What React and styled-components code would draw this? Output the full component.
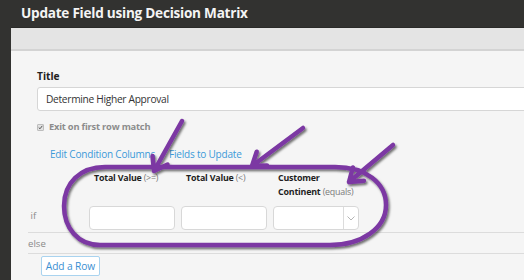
import React from "react";
import styled, { createGlobalStyle } from "styled-components";

const Global = createGlobalStyle`
  html, body { margin: 0; padding: 0; background: #323230; overflow: hidden; }
  * { box-sizing: border-box; }
`;

const Root = styled.div`
  position: relative;
  width: 524px;
  height: 280px;
  overflow: hidden;
  font-family: "Open Sans", "Noto Sans", sans-serif;
  background: #323230;
`;

const Header = styled.div`
  height: 27px;
  padding-left: 21px;
  display: flex;
  align-items: center;
`;

const HeaderTitle = styled.div`
  color: #f4f4f4;
  font-weight: 700;
  font-size: 13.6px;
  line-height: 20px;
  margin-top: -2px;
  letter-spacing: -0.25px;
`;

const Modal = styled.div`
  margin-left: 11px;
  width: 580px;
  height: 253px;
  background: #f5f5f5;
  border-top: 1px solid #2a2a28;
`;

const ModalBar = styled.div`
  height: 23px;
  background: #e4e4e4;
  border-bottom: 2px solid #d3d3d3;
`;

const ModalBody = styled.div`
  padding: 18px 0 0 17px;
`;

const Section = styled.div`
  padding-left: 9px;
`;

const FieldLabel = styled.div`
  font-size: 10.2px;
  line-height: 15px;
  font-weight: 700;
  color: #222;
`;

const TextInput = styled.div`
  margin-top: 3px;
  height: 24px;
  width: 560px;
  background: #fff;
  border: 1px solid #d6d6d6;
  border-radius: 3px;
  padding-left: 8px;
  display: flex;
  align-items: center;
  font-size: 10.2px;
  letter-spacing: -0.3px;
  color: #333;
`;

const CheckRow = styled.div`
  margin-top: 9px;
  display: flex;
  align-items: center;
  gap: 5px;
  font-size: 9.3px;
  letter-spacing: -0.2px;
  line-height: 14px;
  font-weight: 700;
  color: #8c8c8c;
`;

const CheckBox = styled.span`
  width: 7px;
  height: 7px;
  background: #e2e2e2;
  border: 1px solid #bdbdbd;
  border-radius: 1px;
  display: inline-flex;
  align-items: center;
  justify-content: center;
  margin-top: 1px;
`;

const Links = styled.div`
  margin-top: 13px;
  padding-left: 13px;
  display: flex;
  gap: 14px;
  font-size: 10px;
  letter-spacing: -0.2px;
  line-height: 15px;
`;

const LinkText = styled.span`
  color: #3b9ad9;
`;

const Matrix = styled.div`
  margin-top: 9px;
  width: 600px;
`;

const MatrixRow = styled.div`
  display: grid;
  grid-template-columns: 61px 92px 92px 92px;
  border-bottom: ${(p) => (p.$line ? "1px solid #dcdcdc" : "none")};
  height: ${(p) => p.$h}px;
  align-items: start;
`;

const ColHead = styled.div`
  padding-left: 5px;
  font-size: 8.9px;
  letter-spacing: -0.2px;
  line-height: 14px;
  font-weight: 700;
  color: #1e1e1e;
  white-space: nowrap;
`;

const Op = styled.span`
  font-weight: 400;
  color: #7a7a7a;
`;

const RowLabel = styled.div`
  font-size: 9.6px;
  color: #8a8a8a;
  line-height: 14px;
  padding-top: ${(p) => p.$pt || 0}px;
`;

const CellInput = styled.div`
  width: 86px;
  height: 24px;
  margin-top: 7px;
  background: #fff;
  border: 1px solid #d8d8d8;
  border-radius: 4px;
`;

const SelectBox = styled.div`
  width: 86px;
  height: 24px;
  margin-top: 7px;
  background: #fff;
  border: 1px solid #d8d8d8;
  border-radius: 4px;
  display: flex;
  justify-content: flex-end;
`;

const SelectArrow = styled.div`
  width: 15px;
  border-left: 1px solid #dcdcdc;
  display: flex;
  align-items: center;
  justify-content: center;
`;

const AddButton = styled.button`
  margin: 2px 0 0 13px;
  height: 20px;
  width: 59px;
  padding: 0;
  background: #fff;
  border: 1px solid #a9d3ef;
  border-radius: 2px;
  color: #3a8fd2;
  font-family: inherit;
  font-size: 10.2px;
  letter-spacing: -0.1px;
  display: flex;
  align-items: center;
  justify-content: center;
`;

const Overlay = styled.svg`
  position: absolute;
  left: 0;
  top: 0;
  pointer-events: none;
`;

function arrowHead(sx, sy, tx, ty, len = 15, spread = 35) {
  const a = Math.atan2(sy - ty, sx - tx);
  const r = (spread * Math.PI) / 180;
  const p1 = [tx + len * Math.cos(a - r), ty + len * Math.sin(a - r)];
  const p2 = [tx + len * Math.cos(a + r), ty + len * Math.sin(a + r)];
  return `M${sx} ${sy} L${tx} ${ty} M${p1[0]} ${p1[1]} L${tx} ${ty} L${p2[0]} ${p2[1]}`;
}

const arrows = [
  [182, 121, 154, 171],
  [303, 128, 252, 166],
  [393, 145, 349, 182],
];

export default function App() {
  return (
    <>
      <Global />
      <Root>
        <Header>
          <HeaderTitle>Update Field using Decision Matrix</HeaderTitle>
        </Header>
        <Modal>
          <ModalBar />
          <ModalBody>
            <Section>
              <FieldLabel>Title</FieldLabel>
              <TextInput>Determine Higher Approval</TextInput>
              <CheckRow>
                <CheckBox>
                  <svg width="7" height="7" viewBox="0 0 7 7">
                    <path d="M1 3.5 L2.8 5.3 L6 1.2" fill="none" stroke="#555" strokeWidth="1.4" />
                  </svg>
                </CheckBox>
                Exit on first row match
              </CheckRow>
              <Links>
                <LinkText>Edit Condition Columns</LinkText>
                <LinkText>Fields to Update</LinkText>
              </Links>
            </Section>
            <Matrix>
              <MatrixRow $h={28}>
                <div />
                <ColHead>
                  Total Value <Op>(&gt;=)</Op>
                </ColHead>
                <ColHead>
                  Total Value <Op>(&lt;)</Op>
                </ColHead>
                <ColHead>
                  Customer
                  <br />
                  Continent <Op>(equals)</Op>
                </ColHead>
              </MatrixRow>
              <MatrixRow $h={34} $line>
                <RowLabel $pt={10}>&nbsp;if</RowLabel>
                <CellInput />
                <CellInput />
                <SelectBox>
                  <SelectArrow>
                    <svg width="8" height="5" viewBox="0 0 8 5">
                      <path d="M0.5 0.5 L4 4 L7.5 0.5" fill="none" stroke="#b5b5b5" strokeWidth="1" />
                    </svg>
                  </SelectArrow>
                </SelectBox>
              </MatrixRow>
              <MatrixRow $h={21} $line>
                <RowLabel $pt={4}>else</RowLabel>
              </MatrixRow>
            </Matrix>
            <AddButton>Add a Row</AddButton>
          </ModalBody>
        </Modal>
        <Overlay width="524" height="280" viewBox="0 0 524 280">
          <defs>
            <filter id="sh" x="-10%" y="-10%" width="130%" height="130%">
              <feDropShadow dx="1.5" dy="2" stdDeviation="1.2" floodColor="#000" floodOpacity="0.55" />
            </filter>
          </defs>
          <g filter="url(#sh)" fill="none" stroke="#7b38a3" strokeWidth="4.5" strokeLinecap="round" strokeLinejoin="round">
            <path d="M105 167 L335 167 C366 167 386 183 386 205 C386 228 362 245 330 245 L100 245 C78 245 64 228 64 206 C64 183 80 167 105 167 Z" />
            {arrows.map(([sx, sy, tx, ty], i) => (
              <path key={i} d={arrowHead(sx, sy, tx, ty)} />
            ))}
          </g>
        </Overlay>
      </Root>
    </>
  );
}
